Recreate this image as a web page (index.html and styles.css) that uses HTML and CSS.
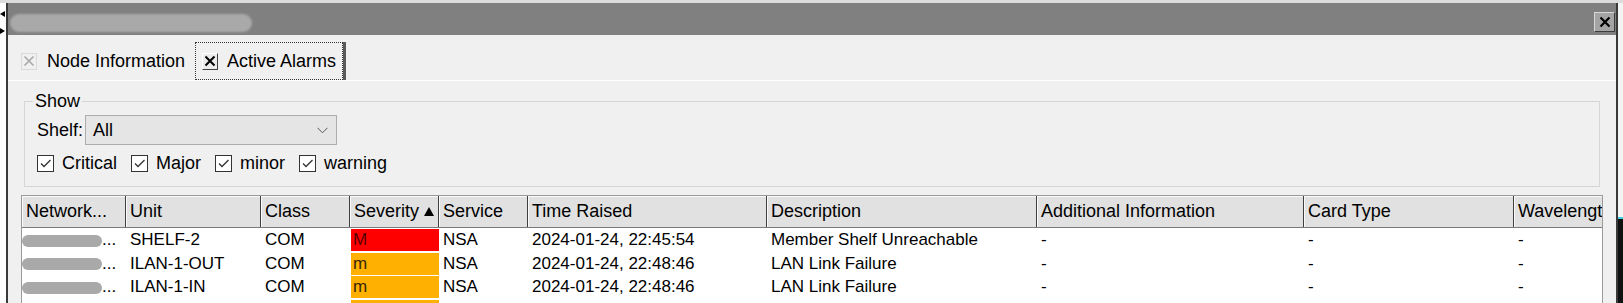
FILE: index.html
```html
<!DOCTYPE html>
<html lang="en">
<head>
    <meta charset="UTF-8">
    <title>Active Alarms</title>
    <link rel="stylesheet" href="styles.css">
</head>
<body>
    <div class="topline"></div>
    <div class="screen">
        <div class="gutter">
            <span class="arrow arrow-left"></span>
            <span class="arrow arrow-right"></span>
        </div>

        <div class="window">
            <div class="titlebar">
                <span class="title-hidden"></span>
                <button class="close" type="button">
                    <svg width="12" height="12" viewBox="0 0 12 12"><path d="M1.5 1.5 L10.5 10.5 M10.5 1.5 L1.5 10.5" stroke="#000" stroke-width="2.2" fill="none"/></svg>
                </button>
            </div>

            <div class="tabs">
                <div class="tab">
                    <span class="tab-x dim">
                        <svg width="12" height="12" viewBox="0 0 12 12"><path d="M1.5 1.5 L10.5 10.5 M10.5 1.5 L1.5 10.5" stroke="#a8a8a8" stroke-width="1.6" fill="none"/></svg>
                    </span>
                    Node Information
                </div>
                <div class="tab active">
                    <div class="focus">
                        <span class="tab-x">
                            <svg width="12" height="12" viewBox="0 0 12 12"><path d="M1.5 1.5 L10.5 10.5 M10.5 1.5 L1.5 10.5" stroke="#000" stroke-width="2" fill="none"/></svg>
                        </span>
                        Active Alarms
                    </div>
                </div>
            </div>

            <fieldset class="filters">
                <legend>Show</legend>
                <div class="shelf-row">
                    <label>Shelf:</label>
                    <div class="select">
                        <span>All</span>
                        <svg width="11" height="7" viewBox="0 0 11 7"><path d="M0.5 0.8 L5.5 5.8 L10.5 0.8" stroke="#555" stroke-width="1" fill="none"/></svg>
                    </div>
                </div>
                <div class="checks">
                    <span class="check"><span class="box"><svg width="15" height="15" viewBox="0 0 15 15"><path d="M3 7.5 L6 10.5 L12.5 4" stroke="#333" stroke-width="1.3" fill="none"/></svg></span>Critical</span>
                    <span class="check"><span class="box"><svg width="15" height="15" viewBox="0 0 15 15"><path d="M3 7.5 L6 10.5 L12.5 4" stroke="#333" stroke-width="1.3" fill="none"/></svg></span>Major</span>
                    <span class="check"><span class="box"><svg width="15" height="15" viewBox="0 0 15 15"><path d="M3 7.5 L6 10.5 L12.5 4" stroke="#333" stroke-width="1.3" fill="none"/></svg></span>minor</span>
                    <span class="check"><span class="box"><svg width="15" height="15" viewBox="0 0 15 15"><path d="M3 7.5 L6 10.5 L12.5 4" stroke="#333" stroke-width="1.3" fill="none"/></svg></span>warning</span>
                </div>
            </fieldset>

            <div class="alarms">
                <div class="row head">
                    <div class="cell">Network...</div>
                    <div class="cell">Unit</div>
                    <div class="cell">Class</div>
                    <div class="cell sorted">Severity <span class="sort-up"></span></div>
                    <div class="cell">Service</div>
                    <div class="cell">Time Raised</div>
                    <div class="cell">Description</div>
                    <div class="cell">Additional Information</div>
                    <div class="cell">Card Type</div>
                    <div class="cell">Wavelength</div>
                </div>
                <div class="row">
                    <div class="cell"><span class="hidden-name"></span>...</div>
                    <div class="cell">SHELF-2</div>
                    <div class="cell">COM</div>
                    <div class="cell sev-cell"><span class="sev major">M</span></div>
                    <div class="cell">NSA</div>
                    <div class="cell">2024-01-24, 22:45:54</div>
                    <div class="cell">Member Shelf Unreachable</div>
                    <div class="cell">-</div>
                    <div class="cell">-</div>
                    <div class="cell">-</div>
                </div>
                <div class="row">
                    <div class="cell"><span class="hidden-name"></span>...</div>
                    <div class="cell">ILAN-1-OUT</div>
                    <div class="cell">COM</div>
                    <div class="cell sev-cell"><span class="sev minor">m</span></div>
                    <div class="cell">NSA</div>
                    <div class="cell">2024-01-24, 22:48:46</div>
                    <div class="cell">LAN Link Failure</div>
                    <div class="cell">-</div>
                    <div class="cell">-</div>
                    <div class="cell">-</div>
                </div>
                <div class="row">
                    <div class="cell"><span class="hidden-name"></span>...</div>
                    <div class="cell">ILAN-1-IN</div>
                    <div class="cell">COM</div>
                    <div class="cell sev-cell"><span class="sev minor">m</span></div>
                    <div class="cell">NSA</div>
                    <div class="cell">2024-01-24, 22:48:46</div>
                    <div class="cell">LAN Link Failure</div>
                    <div class="cell">-</div>
                    <div class="cell">-</div>
                    <div class="cell">-</div>
                </div>
                <div class="row">
                    <div class="cell"></div>
                    <div class="cell"></div>
                    <div class="cell"></div>
                    <div class="cell sev-cell"><span class="sev minor"></span></div>
                    <div class="cell"></div>
                    <div class="cell"></div>
                    <div class="cell"></div>
                    <div class="cell"></div>
                    <div class="cell"></div>
                    <div class="cell"></div>
                </div>
            </div>
        </div>

        <div class="outside">
            <div class="lit"></div>
            <div class="dark"></div>
        </div>
    </div>
</body>
</html>
```

FILE: styles.css
```css
body {
    margin: 0;
    height: 303px;
    overflow: hidden;
    background-color: #fff;
    font-family: 'Liberation Sans', Arial, sans-serif;
    font-size: 18px;
    color: #000;
}

.topline {
    height: 3px;
    background-color: #dcdcdc;
}

.screen {
    display: flex;
    height: 300px;
}

/* splitter arrows on the far left */
.gutter {
    width: 6px;
    display: flex;
    flex-direction: column;
    padding-top: 8px;
    gap: 11px;
}

.arrow {
    width: 0;
    height: 0;
    border-top: 3px solid transparent;
    border-bottom: 3px solid transparent;
}

.arrow-left {
    border-right: 5px solid #000;
}

.arrow-right {
    border-left: 5px solid #000;
}

.window {
    width: 1612px;
    box-sizing: border-box;
    border-left: 2px solid #3a3a3a;
    border-right: 2px solid #3a3a3a;
    background-color: #f0f0f0;
    display: flex;
    flex-direction: column;
    overflow: hidden;
}

.titlebar {
    height: 32px;
    flex-shrink: 0;
    background-color: #808080;
    display: flex;
    align-items: flex-end;
    justify-content: space-between;
    padding: 0 1px 3px 2px;
    box-sizing: border-box;
}

.title-hidden {
    width: 242px;
    height: 18px;
    border-radius: 9px;
    background-color: #a9a9a9;
    filter: blur(0.8px);
}

.close {
    width: 21px;
    height: 20px;
    padding: 0;
    background-color: #a4a4a4;
    border: 1px solid;
    border-color: #d8d8d8 #3c3c3c #3c3c3c #d8d8d8;
    display: flex;
    align-items: center;
    justify-content: center;
}

/* tabs */
.tabs {
    height: 46px;
    flex-shrink: 0;
    box-sizing: border-box;
    display: flex;
    align-items: flex-end;
    gap: 5px;
    padding-left: 2px;
    border-bottom: 1px solid #fff;
}

.tab {
    height: 38px;
    box-sizing: border-box;
    display: flex;
    align-items: center;
    gap: 10px;
    padding: 0 5px 0 11px;
    white-space: nowrap;
}

.tab.active {
    padding: 0;
    border-right: 3px solid #5a5a5a;
}

.focus {
    height: 100%;
    box-sizing: border-box;
    display: flex;
    align-items: center;
    gap: 9px;
    padding: 0 6px 0 6px;
    border: 1px dotted #333;
}

.tab-x {
    width: 16px;
    height: 17px;
    box-sizing: border-box;
    display: flex;
    align-items: center;
    justify-content: center;
    border: 1px solid;
    border-color: #fff #404040 #404040 #fff;
    background-color: #ececec;
}

.tab-x.dim {
    border-color: #dadada;
    background-color: #f0f0f0;
}

/* Show group */
.filters {
    margin: 10px 16px 0;
    padding: 4px 12px 13px;
    border: 1px solid #d5d5d5;
    min-width: 0;
    flex-shrink: 0;
}

.filters legend {
    padding: 0 2px;
    margin-left: -4px;
    line-height: 20px;
}

.shelf-row {
    display: flex;
    align-items: center;
    gap: 2px;
}

.select {
    width: 252px;
    height: 30px;
    box-sizing: border-box;
    border: 1px solid #adadad;
    background-color: #e5e5e5;
    display: flex;
    align-items: center;
    justify-content: space-between;
    padding: 0 8px 0 7px;
}

.checks {
    display: flex;
    gap: 14px;
    margin-top: 8px;
    line-height: 20px;
}

.check {
    display: flex;
    align-items: center;
    gap: 8px;
}

.box {
    width: 17px;
    height: 17px;
    box-sizing: border-box;
    border: 1px solid #333;
    background-color: #fff;
    display: flex;
    align-items: center;
    justify-content: center;
}

/* alarm table */
.alarms {
    margin: 8px 13px 0;
    border: 1px solid #9a9a9a;
    background-color: #fff;
}

.row {
    display: grid;
    grid-template-columns: 104px 135px 89px 89px 89px 239px 270px 267px 210px 1fr;
    height: 23.5px;
    font-size: 17px;
    line-height: 23.5px;
}

.cell {
    padding: 0 4px;
    white-space: nowrap;
    overflow: hidden;
}

.row.head {
    height: 32px;
    font-size: 18px;
    line-height: 31px;
    border-bottom: 1px solid #7a7a7a;
    box-sizing: border-box;
}

.head .cell {
    background-color: #e1e1e1;
    border-right: 1px solid #3f3f3f;
    box-shadow: inset 1px 1px 0 #fafafa;
}

.head .cell:last-child {
    border-right: none;
}

.sorted {
    display: flex;
    align-items: center;
    justify-content: space-between;
}

.sort-up {
    width: 0;
    height: 0;
    border-left: 5px solid transparent;
    border-right: 5px solid transparent;
    border-bottom: 9px solid #000;
}

.sev-cell {
    padding: 0;
}

.sev {
    display: block;
    height: 22px;
    margin: 1px 0 0 1px;
    padding-left: 2px;
    line-height: 22px;
}

.sev.major {
    background-color: #ff0000;
    color: #5a0000;
}

.sev.minor {
    background-color: #ffb000;
    color: #3a2600;
}

.hidden-name {
    display: inline-block;
    width: 80px;
    height: 12px;
    margin-left: -4px;
    border-radius: 6px;
    background-color: #a9a9a9;
    filter: blur(0.7px);
    vertical-align: middle;
}

/* edge of the next window */
.outside {
    width: 5px;
    display: flex;
    flex-direction: column;
}

.outside .lit {
    height: 214px;
    background-color: #f4f4f4;
}

.outside .dark {
    flex: 1;
    background-color: #111;
    border-top: 2px solid #3cd0e0;
}
```
